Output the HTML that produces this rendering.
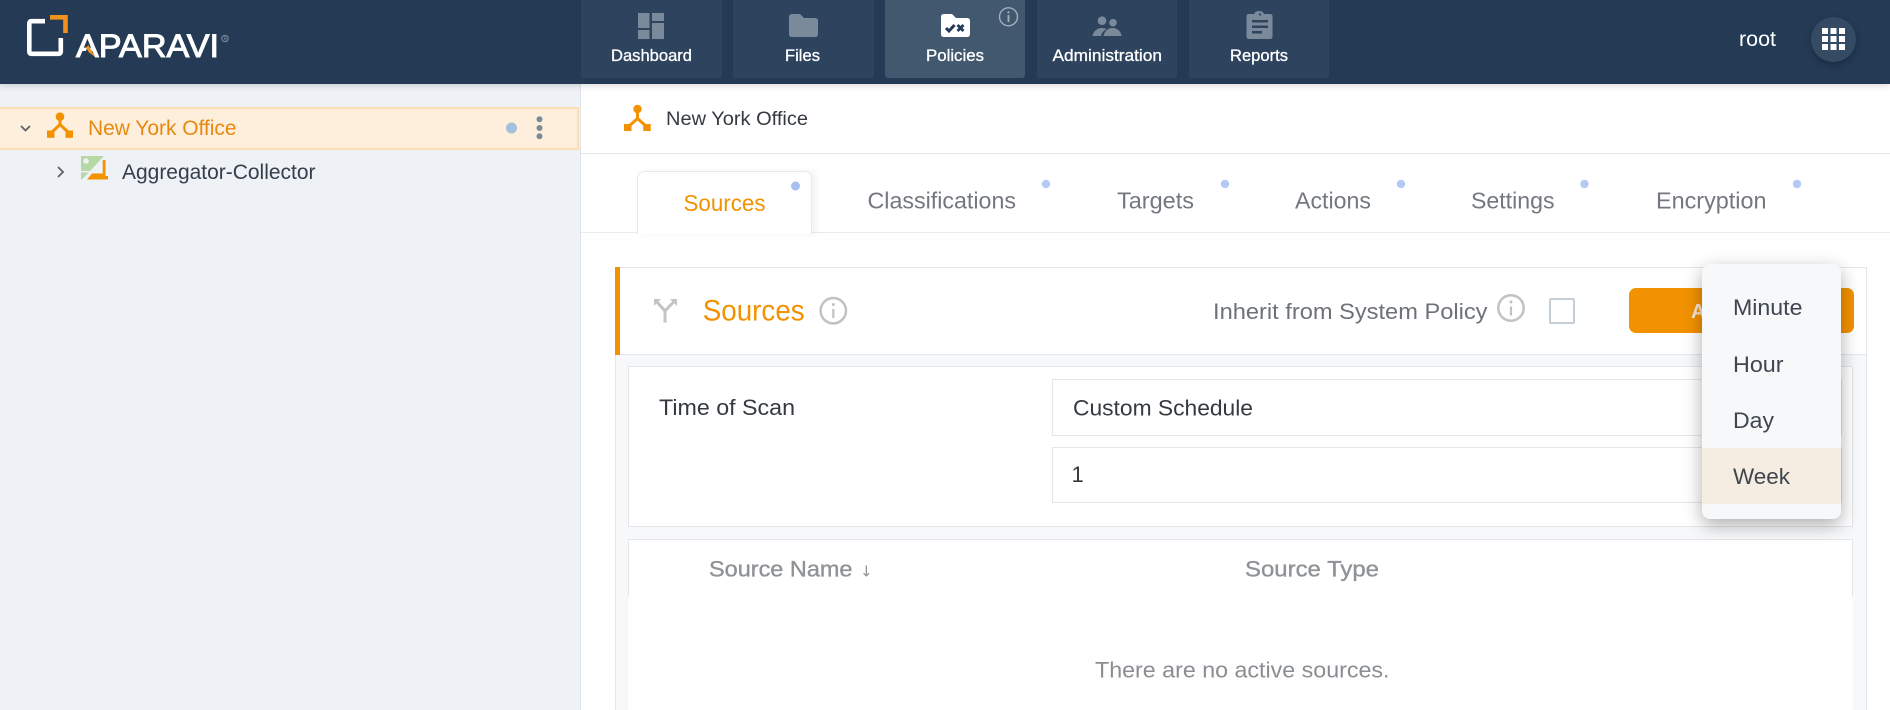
<!DOCTYPE html>
<html lang="en">
<head>
<meta charset="utf-8">
<title>Aparavi - Policies</title>
<style>
html,body{margin:0;padding:0;background:#fff;width:1890px;height:710px;overflow:hidden}
body{position:relative;font-family:"Liberation Sans",sans-serif}
div{position:absolute;box-sizing:border-box}
svg{position:absolute;left:0;top:0}
text{font-family:"Liberation Sans",sans-serif}
</style>
</head>
<body>
<!-- sidebar -->
<div style="left:0;top:84px;width:581px;height:626px;background:#eef1f5;border-right:1px solid #dfe3e8"></div>
<div style="left:-3px;top:107px;width:582px;height:43px;background:#fdefdc;border:2px solid #fbdfb4"></div>
<!-- header -->
<div style="left:0;top:0;width:1890px;height:84px;background:#243a55;box-shadow:0 2px 6px rgba(0,0,0,.14)"></div>
<div style="left:581px;top:0;width:141px;height:78px;background:#2e435e;border-radius:0 0 3px 3px"></div>
<div style="left:733px;top:0;width:141px;height:78px;background:#2e435e;border-radius:0 0 3px 3px"></div>
<div style="left:885px;top:0;width:140px;height:78px;background:#42586f;border-radius:0 0 3px 3px"></div>
<div style="left:1037px;top:0;width:140px;height:78px;background:#2e435e;border-radius:0 0 3px 3px"></div>
<div style="left:1189px;top:0;width:140px;height:78px;background:#2e435e;border-radius:0 0 3px 3px"></div>
<div style="left:1811px;top:17px;width:45px;height:45px;border-radius:50%;background:#344b63;box-shadow:0 3px 7px rgba(0,0,0,.25)"></div>
<!-- content rows -->
<div style="left:581px;top:153px;width:1309px;height:1px;background:#e3e6ea"></div>
<div style="left:581px;top:232px;width:1309px;height:1px;background:#e9ecef"></div>
<div style="left:637px;top:171px;width:175px;height:63px;background:#fff;border:1px solid #e6e9ed;border-bottom:none;border-radius:7px 7px 0 0;box-shadow:4px 0 7px rgba(0,0,0,.05)"></div>
<!-- panel -->
<div style="left:615px;top:267px;width:1252px;height:450px;background:#f6f8fa;border:1px solid #e3e6ea"></div>
<div style="left:615px;top:267px;width:1252px;height:88px;background:#fff;border:1px solid #e3e6ea;border-left:none"></div>
<div style="left:615px;top:267px;width:5px;height:88px;background:#f39200"></div>
<div style="left:1629px;top:288px;width:225px;height:45px;background:#f39200;border-radius:7px"></div>
<div style="left:1549px;top:298px;width:26px;height:26px;background:#fff;border:2px solid #c3ced6;border-radius:2px"></div>
<div style="left:628px;top:366px;width:1225px;height:161px;background:#fff;border:1px solid #e3e6ea"></div>
<div style="left:1052px;top:379px;width:790px;height:57px;background:#fff;border:1px solid #e3e6ea"></div>
<div style="left:1052px;top:447px;width:790px;height:56px;background:#fff;border:1px solid #e3e6ea"></div>
<div style="left:628px;top:539px;width:1225px;height:58px;background:#fff;border:1px solid #e3e6ea;border-bottom:none"></div>
<div style="left:628px;top:597px;width:1225px;height:113px;background:#fefefe"></div>

<svg width="1890" height="710" viewBox="0 0 1890 710" xmlns="http://www.w3.org/2000/svg">
  <!-- logo -->
  <path d="M45 21.200H31.500Q29.300 21.200 29.300 23.400V51.500Q29.300 53.800 31.500 53.800H58.500Q60.800 53.800 60.800 51.500V38" fill="none" stroke="#fff" stroke-width="4.600"/>
  <path d="M50 17.300H65.500V33" fill="none" stroke="#f0921e" stroke-width="4.600"/>
  <text x="76" y="57" font-size="32" fill="#fff" stroke="#fff" stroke-width="1" textLength="143" lengthAdjust="spacingAndGlyphs">APARAVI</text>
  <path d="M88.500 44L83.500 57.500H93.500Z" fill="#243a55"/>
  <path d="M86 47.500L88.500 45 95 57 89 52.500Z" fill="#f0921e"/>
  <circle cx="225" cy="38.500" r="3.200" fill="none" stroke="#8e9aa7" stroke-width=".9"/>
  <text x="223.500" y="40.500" font-size="5" fill="#8e9aa7">R</text>

  <!-- nav icons -->
  <g fill="#7b8a9b">
    <rect x="638" y="13" width="11.500" height="15"/><rect x="638" y="30" width="11.500" height="9"/>
    <rect x="652" y="13" width="12" height="8"/><rect x="652" y="23" width="12" height="16"/>
    <path d="M789 17q0-3 3-3h8l4 4h11q3 0 3 3v13q0 3-3 3h-23q-3 0-3-3z"/>
    <circle cx="1102" cy="20.700" r="4.300"/><circle cx="1113" cy="22.700" r="3.800"/>
    <path d="M1092.500 36c1-5 5-8 9-8q3 0 5 1c-3 2-5 4-5.500 7z"/>
    <path d="M1103.500 36c1-5 4.500-8 9-8s8.500 3 9 8z"/>
    <path d="M1249 14h5q1-3 5-3t5 3h6q2.500 0 2.500 2.500v20q0 2.500-2.500 2.500h-21q-2.500 0-2.500-2.500v-20q0-2.500 2.500-2.500z"/>
  </g>
  <g fill="#2e435e">
    <circle cx="1260" cy="14.500" r="1.100"/>
    <rect x="1252" y="20" width="16" height="2.500"/><rect x="1252" y="25.500" width="16" height="2.500"/><rect x="1252" y="31" width="10" height="2.500"/>
  </g>
  <path d="M941 17q0-3 3-3h8l4 4h11q3 0 3 3v13q0 3-3 3h-23q-3 0-3-3z" fill="#fff"/>
  <path d="M946 28l3 3 5.500-6" fill="none" stroke="#243a55" stroke-width="3"/>
  <path d="M957.500 25l6 6m0-6l-6 6" fill="none" stroke="#243a55" stroke-width="2.800"/>
  <circle cx="1008.500" cy="16.800" r="9" fill="none" stroke="#a3b0bc" stroke-width="1.400"/>
  <rect x="1007.600" y="15" width="1.800" height="7" fill="#a3b0bc"/><circle cx="1008.500" cy="12.300" r="1.100" fill="#a3b0bc"/>

  <!-- nav labels -->
  <g font-size="17" fill="#fff" stroke="#fff" stroke-width=".3">
    <text x="611" y="61" textLength="81" lengthAdjust="spacingAndGlyphs">Dashboard</text>
    <text x="785" y="61" textLength="35" lengthAdjust="spacingAndGlyphs">Files</text>
    <text x="926" y="61" textLength="58" lengthAdjust="spacingAndGlyphs">Policies</text>
    <text x="1052.500" y="61" textLength="109.500" lengthAdjust="spacingAndGlyphs">Administration</text>
    <text x="1230" y="61" textLength="58" lengthAdjust="spacingAndGlyphs">Reports</text>
  </g>
  <text x="1739" y="46" font-size="21" fill="#fff" textLength="37" lengthAdjust="spacingAndGlyphs">root</text>
  <g fill="#fff">
    <rect x="1822" y="28" width="6" height="6"/><rect x="1830.500" y="28" width="6" height="6"/><rect x="1839" y="28" width="6" height="6"/>
    <rect x="1822" y="36" width="6" height="6"/><rect x="1830.500" y="36" width="6" height="6"/><rect x="1839" y="36" width="6" height="6"/>
    <rect x="1822" y="44" width="6" height="6"/><rect x="1830.500" y="44" width="6" height="6"/><rect x="1839" y="44" width="6" height="6"/>
  </g>

  <!-- tree -->
  <path d="M21 126l4.500 4.500 4.500-4.500" fill="none" stroke="#5f6368" stroke-width="1.800"/>
  <circle cx="60" cy="116.700" r="4.300" fill="#f39200"/>
  <rect x="47" y="130.500" width="7.500" height="7.300" fill="#f39200"/><rect x="65.500" y="130.500" width="7.500" height="7.300" fill="#f39200"/>
  <path d="M60 119V124.500L51 133M60 124.500L69 133" fill="none" stroke="#f39200" stroke-width="3"/>
  <text x="88" y="135" font-size="21" fill="#e8890f" textLength="148.500" lengthAdjust="spacingAndGlyphs">New York Office</text>
  <circle cx="511.500" cy="128" r="5.500" fill="#a3c0dd"/>
  <g fill="#7b8c99"><circle cx="539.500" cy="119.300" r="3"/><circle cx="539.500" cy="128" r="3"/><circle cx="539.500" cy="136.300" r="3"/></g>
  <path d="M58 167l5 5-5 5" fill="none" stroke="#5f6368" stroke-width="1.800"/>
  <path d="M81 156H104L90 171H81Z" fill="#b6d8a4"/>
  <path d="M81 180V172.500H89Z" fill="#b6d8a4"/>
  <circle cx="86" cy="161" r="2.800" fill="#eef1f5"/>
  <path d="M87 179.500L92 173.500H102.700V160H105.500V176H108V179.500Z" fill="#f39200"/>
  <text x="122" y="179" font-size="21" fill="#343f4b" textLength="193.500" lengthAdjust="spacingAndGlyphs">Aggregator-Collector</text>

  <!-- breadcrumb -->
  <circle cx="637.500" cy="109" r="4.200" fill="#f39200"/>
  <rect x="624" y="124" width="7.500" height="7" fill="#f39200"/><rect x="643.200" y="124" width="7.500" height="7" fill="#f39200"/>
  <path d="M637.500 111V118.500L628 127M637.500 118.500L647 127" fill="none" stroke="#f39200" stroke-width="3"/>
  <text x="666" y="125" font-size="19" fill="#343a40" textLength="142" lengthAdjust="spacingAndGlyphs">New York Office</text>

  <!-- tabs -->
  <text x="683.500" y="211" font-size="23" fill="#f39200" textLength="82" lengthAdjust="spacingAndGlyphs">Sources</text>
  <g font-size="23" fill="#73787e">
    <text x="867.500" y="208.500" textLength="148.500" lengthAdjust="spacingAndGlyphs">Classifications</text>
    <text x="1117" y="208.500" textLength="77" lengthAdjust="spacingAndGlyphs">Targets</text>
    <text x="1295" y="208.500" textLength="76" lengthAdjust="spacingAndGlyphs">Actions</text>
    <text x="1471" y="208.500" textLength="83.500" lengthAdjust="spacingAndGlyphs">Settings</text>
    <text x="1656" y="208.500" textLength="110.500" lengthAdjust="spacingAndGlyphs">Encryption</text>
  </g>
  <g fill="#b6c9f5">
    <circle cx="795.500" cy="186" r="4.500" fill="#a9bff2"/><circle cx="1046" cy="184" r="4.200"/><circle cx="1225" cy="184" r="4.200"/>
    <circle cx="1401" cy="184" r="4.200"/><circle cx="1584.500" cy="184" r="4.200"/><circle cx="1797" cy="184" r="4.200"/>
  </g>

  <!-- section head -->
  <path d="M665 322.500V311L657 302M665 311L673.500 302" fill="none" stroke="#c4c4c4" stroke-width="3"/>
  <path d="M654 299h7l-7 7z" fill="#c4c4c4"/><path d="M677 299h-7l7 7z" fill="#c4c4c4"/>
  <text x="702.700" y="320.500" font-size="30" fill="#f39200" textLength="102" lengthAdjust="spacingAndGlyphs">Sources</text>
  <circle cx="833.300" cy="310.700" r="12.700" fill="none" stroke="#c2c2c2" stroke-width="2.500"/>
  <rect x="832.200" y="309" width="2.200" height="9" fill="#c2c2c2"/><circle cx="833.300" cy="304.500" r="1.500" fill="#c2c2c2"/>
  <text x="1213" y="319" font-size="22.500" fill="#6d7278" textLength="274.500" lengthAdjust="spacingAndGlyphs">Inherit from System Policy</text>
  <circle cx="1511" cy="308" r="12.700" fill="none" stroke="#c2c2c2" stroke-width="2.500"/>
  <rect x="1509.900" y="306.500" width="2.200" height="9" fill="#c2c2c2"/><circle cx="1511" cy="302" r="1.500" fill="#c2c2c2"/>
  <text x="1691" y="318" font-size="20" font-weight="700" fill="#f7ead6">Add</text>

  <!-- form -->
  <text x="659" y="415" font-size="22" fill="#343a40" textLength="136" lengthAdjust="spacingAndGlyphs">Time of Scan</text>
  <text x="1073" y="415.500" font-size="22" fill="#343a40" textLength="180" lengthAdjust="spacingAndGlyphs">Custom Schedule</text>
  <text x="1071.500" y="482" font-size="22" fill="#343a40">1</text>

  <!-- table -->
  <g font-size="22" fill="#8f9296" stroke="#8f9296" stroke-width=".35">
    <text x="709" y="576.500" textLength="143.500" lengthAdjust="spacingAndGlyphs">Source Name</text>
    <text x="1245" y="576.500" textLength="134" lengthAdjust="spacingAndGlyphs">Source Type</text>
  </g>
  <text x="860" y="576.500" font-size="15" fill="#8f9296" style="font-family:'DejaVu Sans',sans-serif">↓</text>
  <text x="1095" y="677.500" font-size="22" fill="#8a8d91" textLength="294.500" lengthAdjust="spacingAndGlyphs">There are no active sources.</text>
</svg>

<!-- dropdown -->
<div style="left:1702px;top:264px;width:139px;height:255px;background:#f6f8fa;border-radius:8px;box-shadow:0 6px 18px rgba(0,0,0,.32);overflow:hidden">
  <div style="left:0;top:184px;width:139px;height:56px;background:#f5ede1"></div>
</div>
<svg width="1890" height="710" viewBox="0 0 1890 710" xmlns="http://www.w3.org/2000/svg">
  <g font-size="22" fill="#3f4650">
    <text x="1733" y="315" textLength="69.500" lengthAdjust="spacingAndGlyphs">Minute</text>
    <text x="1733" y="372" textLength="50.500" lengthAdjust="spacingAndGlyphs">Hour</text>
    <text x="1733" y="428" textLength="41" lengthAdjust="spacingAndGlyphs">Day</text>
    <text x="1733" y="484" textLength="57" lengthAdjust="spacingAndGlyphs">Week</text>
  </g>
</svg>
</body>
</html>
